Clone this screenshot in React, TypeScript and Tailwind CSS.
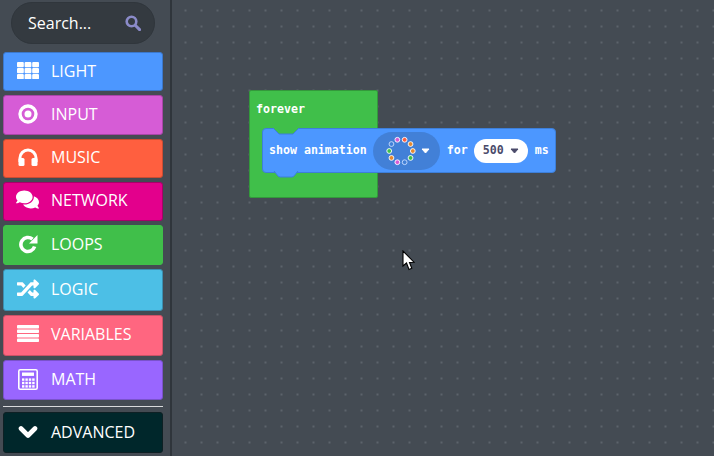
import type { ReactNode } from "react";
import { FaComments, FaRandom } from "react-icons/fa";

const categories: {
  name: string;
  icon: ReactNode;
  className: string;
}[] = [
  { name: "LIGHT", icon: <GridIcon />, className: "h-[39px] pb-[2px] bg-[#4c97ff] border-[#3b78cc]" },
  { name: "INPUT", icon: <TargetIcon />, className: "h-[40px] pb-[2px] bg-[#d65cd6] border-[#a845a8]" },
  { name: "MUSIC", icon: <HeadphonesIcon />, className: "h-[39px] pb-[4px] bg-[#ff5f3f] border-[#cc4c32]" },
  { name: "NETWORK", icon: <FaComments size={23} />, className: "h-[39px] pb-[4px] bg-[#e3008c] border-[#a80068]" },
  { name: "LOOPS", icon: <RepeatIcon />, className: "h-[40px] pb-[2px] bg-[#40bf4a] border-[#40bf4a]" },
  { name: "LOGIC", icon: <FaRandom size={22} />, className: "h-[42px] pb-[2px] bg-[#4cbfe6] border-[#3b8fb0]" },
  { name: "VARIABLES", icon: <StackIcon />, className: "h-[41px] pb-[4px] bg-[#ff6680] border-[#cc5266]" },
  { name: "MATH", icon: <CalculatorIcon />, className: "h-[40px] pb-[2px] bg-[#9966ff] border-[#7a52cc]" },
];

const ringColors = [
  "#d65cd6",
  "#ff5f3f",
  "#e6892e",
  "#e6892e",
  "#40bf4a",
  "transparent",
  "#d65cd6",
  "#e6892e",
  "#40bf4a",
  "transparent",
];

function GridIcon() {
  const cells = [];
  for (let row = 0; row < 3; row++) {
    for (let col = 0; col < 3; col++) {
      cells.push(<rect key={`${row}-${col}`} x={col * 7.6} y={row * 6} width="6.8" height="5.2" rx="1" fill="white" />);
    }
  }
  return (
    <svg width="22" height="17" viewBox="0 0 22 17">
      {cells}
    </svg>
  );
}

function TargetIcon() {
  return (
    <svg width="20" height="20" viewBox="0 0 20 20" fill="none">
      <circle cx="10" cy="10" r="8" stroke="white" strokeWidth="3.4" />
      <circle cx="10" cy="10" r="3.5" fill="white" />
    </svg>
  );
}

function HeadphonesIcon() {
  return (
    <svg width="20" height="18" viewBox="0 0 20 18">
      <path d="M2 14 V10 A8 8 0 0 1 18 10 V14" fill="none" stroke="white" strokeWidth="3" />
      <rect x="0.5" y="10" width="6" height="8" rx="1.5" fill="white" />
      <rect x="13.5" y="10" width="6" height="8" rx="1.5" fill="white" />
    </svg>
  );
}

function RepeatIcon() {
  return (
    <svg width="20" height="20" viewBox="0 0 20 20">
      <path d="M14.5 5.2 A7 7 0 1 0 16.6 12.5" fill="none" stroke="white" strokeWidth="3.6" />
      <path d="M19.5 1 V9.5 H11 Z" fill="white" />
    </svg>
  );
}

function ChevronIcon() {
  return (
    <svg width="20" height="14" viewBox="0 0 20 14">
      <path d="M3 3.5 L10 10.5 L17 3.5" fill="none" stroke="white" strokeWidth="4.6" strokeLinecap="round" strokeLinejoin="round" />
    </svg>
  );
}

function StackIcon() {
  return (
    <svg width="22" height="17" viewBox="0 0 22 17" fill="white">
      <rect x="0" y="0" width="22" height="3.6" rx="0.8" />
      <rect x="0" y="4.5" width="22" height="3.6" rx="0.8" />
      <rect x="0" y="9" width="22" height="3.6" rx="0.8" />
      <rect x="0" y="13.4" width="22" height="3.6" rx="0.8" />
    </svg>
  );
}

function CalculatorIcon() {
  const keys = [];
  for (let row = 0; row < 3; row++) {
    for (let col = 0; col < 4; col++) {
      keys.push(<rect key={`${row}-${col}`} x={4 + col * 3.4} y={9.4 + row * 3.4} width="2.4" height="2.4" fill="white" />);
    }
  }
  return (
    <svg width="20" height="21" viewBox="0 0 20 21" fill="none">
      <rect x="0.8" y="0.8" width="18.4" height="19.4" rx="1.5" stroke="white" strokeWidth="1.6" />
      <rect x="4" y="3.5" width="12" height="3.4" fill="white" />
      {keys}
    </svg>
  );
}

function SearchIcon() {
  return (
    <svg width="16" height="16" viewBox="0 0 16 16" fill="none" stroke="#8b8bc9">
      <circle cx="6.5" cy="6.5" r="4.8" strokeWidth="2.6" />
      <path d="M10.2 10.2 L14.6 14.6" strokeWidth="3" strokeLinecap="round" />
    </svg>
  );
}

function AnimationRing() {
  return (
    <svg width="30" height="30" viewBox="0 0 30 30">
      {ringColors.map((color, index) => {
        const angle = ((-108 + index * 36) * Math.PI) / 180;
        return (
          <circle
            key={index}
            cx={15 + Math.cos(angle) * 11.8}
            cy={15 + Math.sin(angle) * 11.8}
            r="2.4"
            fill={color}
            stroke={color === "transparent" ? "#c8dcff" : "#ffffff"}
            strokeWidth="0.9"
          />
        );
      })}
    </svg>
  );
}

function Caret({ className }: { className: string }) {
  return (
    <svg width="9" height="6" viewBox="0 0 9 6" className={className}>
      <path d="M1 1 H8 L4.5 5 Z" fill="currentColor" stroke="currentColor" strokeWidth="1" strokeLinejoin="round" />
    </svg>
  );
}

export default function App() {
  return (
    <div className="flex h-[456px] w-[714px] overflow-hidden bg-[#444b53] font-['Open_Sans',sans-serif]">
      <aside className="flex h-full w-[172px] shrink-0 flex-col border-r-2 border-[#2f353b] pl-[3px]">
        <div className="flex pb-[8px] pl-[8px] pt-[2px]">
          <div className="flex h-[42px] w-[144px] items-center justify-between rounded-full border border-[#30363c] bg-[#343a40] pl-[16px] pr-[13px] text-[16px] text-white">
            <span>Search...</span>
            <SearchIcon />
          </div>
        </div>

        <div className="flex w-[160px] flex-col gap-[4px]">
          {categories.map((category) => (
            <div
              key={category.name}
              className={`flex items-center rounded-[3px] border ${category.className} text-[16px] text-white`}
            >
              <span className="flex w-[47px] shrink-0 justify-center">{category.icon}</span>
              <span>{category.name}</span>
            </div>
          ))}
        </div>

        <div className="mt-[6px] h-[1px] w-[160px] bg-[#d8dadc]" />

        <div className="mt-[5px] flex h-[41px] w-[160px] items-center rounded-[3px] border border-[#0e2024] bg-[#00272b] pb-[2px] text-[16px] text-white">
          <span className="flex w-[47px] shrink-0 justify-center">
            <ChevronIcon />
          </span>
          <span>ADVANCED</span>
        </div>
      </aside>

      <main className="relative flex-1 bg-[radial-gradient(circle,#757c83_0,#596068_0.8px,transparent_1.5px)] bg-[length:16px_16px] bg-[position:5.5px_2.5px]">
        <div className="absolute left-[77px] top-[90px] h-[108px] w-[129px] rounded-[2px] border border-[#33993b] bg-[#40bf4a] px-[6px] pt-[11px] font-['DejaVu_Sans_Mono',monospace] text-[11.6px] font-bold leading-[14px] text-white">
          forever
        </div>

        <div className="absolute left-[90px] top-[128px] flex h-[45px] w-[294px] items-center rounded-[4px] border border-[#3d7fd9] bg-[#4c97ff] pl-[6px] font-['DejaVu_Sans_Mono',monospace] text-[11.6px] font-bold text-white">
          <svg width="28" height="7" viewBox="0 0 28 7" className="absolute left-[10px] top-[-1px]">
            <path d="M0 0 L6 6 H20 L26 0 Z" fill="#40bf4a" />
            <path d="M0 0 L6 6 H20 L26 0" fill="none" stroke="#3d7fd9" />
          </svg>
          <svg width="28" height="7" viewBox="0 0 28 7" className="absolute bottom-[-6px] left-[10px]">
            <path d="M1 0 L5 5 Q6 6 7 6 H19 Q20 6 21 5 L25 0 Z" fill="#4c97ff" />
            <path d="M1 0 L5 5 Q6 6 7 6 H19 Q20 6 21 5 L25 0" fill="none" stroke="#3d7fd9" />
          </svg>
          <span>show animation</span>
          <div className="ml-[6px] flex h-[38px] w-[67px] items-center rounded-full bg-[#4280d7] pl-[13px]">
            <AnimationRing />
            <Caret className="ml-[5px] text-white" />
          </div>
          <span className="ml-[7px]">for</span>
          <div className="ml-[6px] flex h-[24px] w-[54px] items-center gap-[6px] rounded-full bg-white pl-[9px] text-[#4a4a6a]">
            <span>500</span>
            <Caret className="text-[#4a4a6a]" />
          </div>
          <span className="ml-[7px]">ms</span>
        </div>

        <svg className="absolute left-[230px] top-[250px]" width="14" height="21" viewBox="0 0 14 21">
          <path d="M1 1 L1 16 L4.5 13 L7 19.5 L9.8 18.2 L7.5 12.5 L12 12.2 Z" fill="white" stroke="black" strokeWidth="1.1" />
        </svg>
      </main>
    </div>
  );
}
